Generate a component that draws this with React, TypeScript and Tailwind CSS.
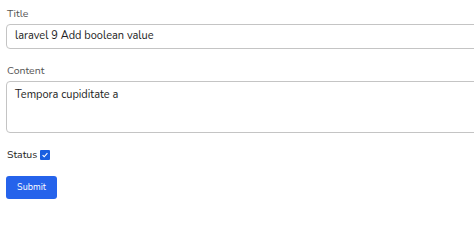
export default function App() {
  return (
    <div className="h-[206px] w-[474px] overflow-hidden bg-white font-['Nunito','Lato','Open_Sans',sans-serif] text-[#212529]">
      <form className="flex w-[500px] flex-col px-[6px] pt-[7px]">
        <label className="mb-[3px] pl-[1px] text-[10.5px] leading-[14px] text-[#555]">Title</label>
        <div className="flex h-[25px] items-center rounded-[4px] border border-[#c4c4c4] px-[8px] text-[11px] text-[#222]">
          laravel 9 Add boolean value
        </div>

        <label className="mb-[3px] mt-[15px] pl-[1px] text-[10.5px] leading-[14px] text-[#555]">Content</label>
        <div className="h-[52px] rounded-[4px] border border-[#c4c4c4] px-[8px] pt-[5px] text-[11px] leading-[15px] text-[#222]">
          Tempora cupiditate a
        </div>

        <div className="mt-[14px] flex h-[16px] items-center gap-[3px] pl-[1px]">
          <span className="text-[10.5px] leading-[16px] text-[#222]">Status</span>
          <span className="flex h-[10px] w-[10px] items-center justify-center rounded-[1px] bg-[#1a5fe0]">
            <svg viewBox="0 0 10 10" className="h-[8px] w-[8px]">
              <path d="M2 5.2 L4 7.2 L8 2.8" stroke="white" strokeWidth="1.4" fill="none" />
            </svg>
          </span>
        </div>

        <div className="mt-[13px]">
          <button
            type="button"
            className="flex h-[23px] w-[51px] items-center justify-center rounded-[3px] bg-[#2563eb] text-[9px] text-white"
          >
            Submit
          </button>
        </div>
      </form>
    </div>
  );
}
